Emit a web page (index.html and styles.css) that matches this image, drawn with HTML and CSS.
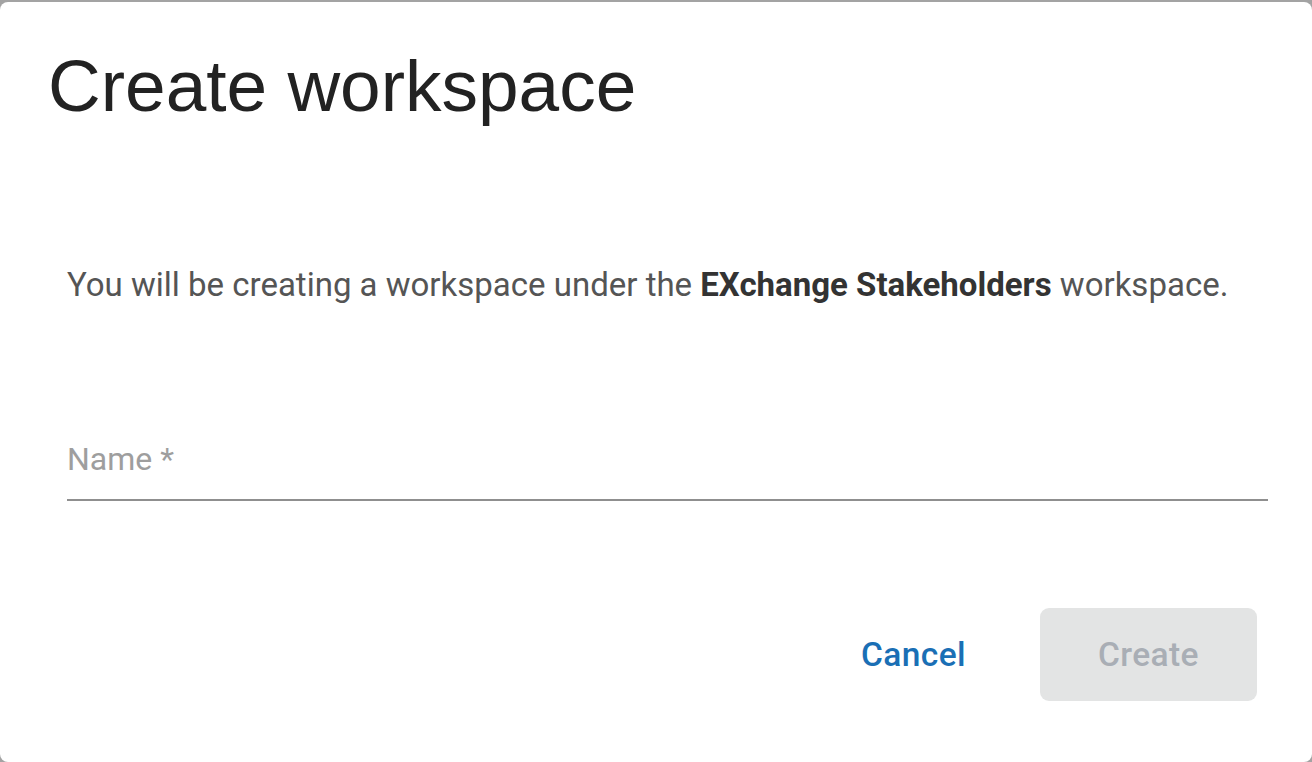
FILE: index.html
```html
<!DOCTYPE html>
<html>
<head>
<meta charset="utf-8">
<link rel="stylesheet" href="styles.css">
</head>
<body>
<div class="dialog">
  <h1 class="title">Create workspace</h1>
  <p class="message">You will be creating a workspace under the <strong>EXchange Stakeholders</strong> workspace.</p>
  <div class="field">
    <div class="label">Name *</div>
    <div class="underline"></div>
  </div>
  <div class="actions">
    <button class="btn btn-text">Cancel</button>
    <button class="btn btn-disabled">Create</button>
  </div>
</div>
</body>
</html>
```
FILE: styles.css
```css
html, body {
  margin: 0;
  padding: 0;
}
body {
  background: #a3a3a3;
  padding-top: 2px;
  width: 1312px;
  height: 762px;
  box-sizing: border-box;
  overflow: hidden;
}
.dialog {
  background: #ffffff;
  height: 760px;
  border-radius: 8px;
  box-sizing: border-box;
  padding: 47px 44px 0 48px;
  display: flex;
  flex-direction: column;
}
.title {
  margin: 0;
  font-family: "Liberation Sans", Arial, sans-serif;
  font-weight: 400;
  font-size: 73px;
  line-height: 73px;
  color: #222222;
}
.message {
  margin: 143px 0 0 19px;
  font-family: Roboto, sans-serif;
  font-size: 33px;
  line-height: 40px;
  color: #555555;
}
.message strong {
  font-weight: 700;
  color: #333333;
}
.field {
  margin: 136px 0 0 19px;
  display: flex;
  flex-direction: column;
}
.label {
  font-family: Roboto, sans-serif;
  font-size: 32px;
  line-height: 36px;
  color: #9e9e9e;
}
.underline {
  margin-top: 22px;
  height: 2px;
  background: #8f8f8f;
}
.actions {
  margin-top: 107px;
  display: flex;
  justify-content: flex-end;
  align-items: center;
  gap: 40px;
  padding-right: 11px;
}
.btn {
  font-family: Roboto, sans-serif;
  font-size: 33.5px;
  font-weight: 500;
  border: none;
  background: none;
  letter-spacing: 0.4px;
}
.btn-text {
  color: #1a6fb5;
  padding: 0 34px;
  height: 93px;
}
.btn-disabled {
  background: #e3e4e4;
  color: #a9aeb5;
  border-radius: 9px;
  width: 217px;
  height: 93px;
}
```
